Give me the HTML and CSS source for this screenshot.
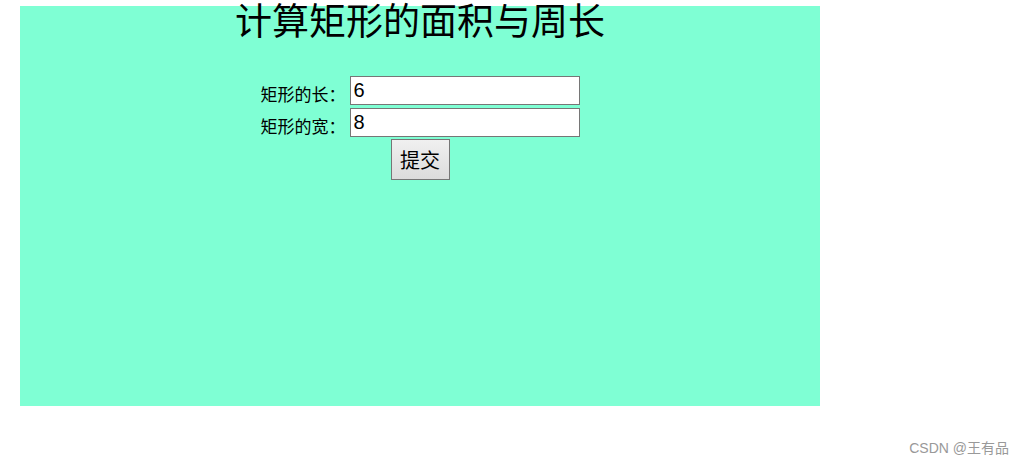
FILE: index.html
```html
<!DOCTYPE html>
<html lang="zh">
<head>
<meta charset="utf-8">
<title>计算矩形的面积与周长</title>
<link rel="stylesheet" href="styles.css">
</head>
<body>
<div class="panel">
  <h1 class="title">计算矩形的面积与周长</h1>
  <form class="form">
    <div class="row"><label class="label">矩形的长：</label><input class="field" type="text" value="6"></div>
    <div class="row"><label class="label">矩形的宽：</label><input class="field" type="text" value="8"></div>
    <button class="submit" type="button">提交</button>
  </form>
</div>
<div class="watermark">CSDN @王有品</div>
</body>
</html>
```
FILE: styles.css
```css
html, body {
  margin: 0;
  padding: 0;
  background: #ffffff;
}
body {
  padding: 6px 0 0 20px;
  font-family: "Liberation Serif", "Noto Sans CJK SC", serif;
}
.panel {
  width: 800px;
  height: 400px;
  background: #7fffd4;
  display: flex;
  flex-direction: column;
  align-items: center;
}
.title {
  margin: 0;
  font-size: 37px;
  line-height: 34px;
  font-weight: normal;
  font-family: "Liberation Serif", "Noto Sans CJK SC", serif;
  color: #000;
}
.form {
  margin: 36px 0 0 0;
  display: flex;
  flex-direction: column;
  align-items: center;
  gap: 3px;
}
.row {
  display: flex;
  align-items: flex-end;
  height: 29px;
  gap: 4px;
}
.label {
  font-family: "Noto Sans CJK SC", sans-serif;
  font-size: 17px;
  line-height: 17px;
  color: #000;
  margin-bottom: 3px;
}
.field {
  box-sizing: border-box;
  width: 230px;
  height: 29px;
  margin: 0;
  border: 1px solid #767676;
  padding: 0 3px;
  font-family: "Liberation Sans", Arial, sans-serif;
  font-size: 20px;
  color: #000;
  background: #fff;
}
.submit {
  box-sizing: border-box;
  width: 59px;
  height: 41px;
  margin: -1px 0 0 0;
  border: 1px solid #767676;
  border-radius: 0;
  background: linear-gradient(#f0f0f0, #dcdcdc);
  font-family: "Noto Sans CJK SC", sans-serif;
  font-size: 20px;
  color: #000;
  padding: 0;
}
.watermark {
  position: absolute;
  right: 14px;
  top: 437px;
  font-family: "Liberation Sans", "Noto Sans CJK SC", sans-serif;
  font-size: 14px;
  color: #999999;
}
```
